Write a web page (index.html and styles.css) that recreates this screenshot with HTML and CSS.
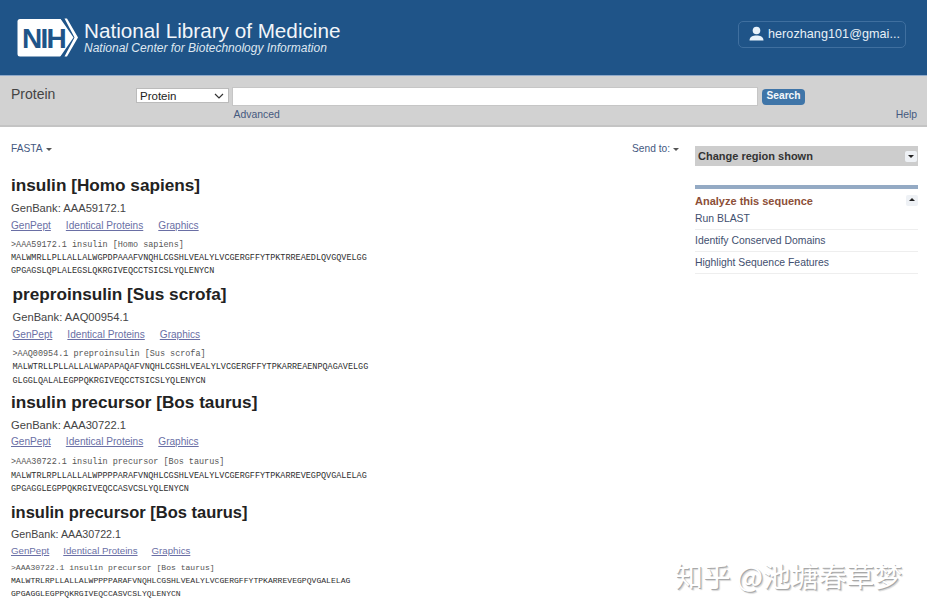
FILE: index.html
```html
<!DOCTYPE html>
<html lang="en">
<head>
<meta charset="utf-8">
<title>Protein - NCBI</title>
<link rel="stylesheet" href="styles.css">
</head>
<body>
<header class="masthead">
  <div class="brand">
    <svg class="nih-logo" width="61" height="40" viewBox="0 0 61 40">
      <path d="M3 1H44L59.500 19.500L44 38.500H3Q0.500 38.500 0.500 36V3.500Q0.500 1 3 1Z" fill="#fff"/>
      <path d="M43 0H47L61 19.500L47 39H43L56.500 19.500Z" fill="#1f5488"/>
      <path d="M47.500 0.500H50L61 19.500L50 38.500H47.500L57.500 19.500Z" fill="#fff"/>
      <text x="5" y="29.500" class="nih-text">NIH</text>
    </svg>
    <div class="brand-text">
      <div class="brand-title">National Library of Medicine</div>
      <div class="brand-sub">National Center for Biotechnology Information</div>
    </div>
  </div>
  <div class="account">
    <svg width="15" height="15" viewBox="0 0 15 15"><circle cx="7.500" cy="4.500" r="3.800" fill="#e8f2fa"/><path d="M0.500 14.500C0.500 10.500 4 9.500 7.500 9.500S14.500 10.500 14.500 14.500Z" fill="#e8f2fa"/></svg>
    <span>herozhang101@gmai...</span>
  </div>
</header>

<section class="searchbar">
  <div class="db-name">Protein</div>
  <div class="select-box"><span>Protein</span><svg width="10" height="6" viewBox="0 0 10 6"><path d="M1 1L5 5L9 1" fill="none" stroke="#333" stroke-width="1.200"/></svg></div>
  <div class="search-col">
    <div class="search-input"></div>
    <a class="advanced">Advanced</a>
  </div>
  <div class="search-right">
    <div class="search-btn">Search</div>
    <a class="help">Help</a>
  </div>
</section>

<main class="content">
  <div class="left">
    <div class="toolbar">
      <span class="tool">FASTA<i class="caret"></i></span>
      <span class="tool">Send to:<i class="caret"></i></span>
    </div>

    <article class="record r1">
      <h2>insulin [Homo sapiens]</h2>
      <div class="acc">GenBank: AAA59172.1</div>
      <div class="links"><a>GenPept</a><a>Identical Proteins</a><a>Graphics</a></div>
      <pre><span class="def">&gt;AAA59172.1 insulin [Homo sapiens]</span>
MALWMRLLPLLALLALWGPDPAAAFVNQHLCGSHLVEALYLVCGERGFFYTPKTRREAEDLQVGQVELGG
GPGAGSLQPLALEGSLQKRGIVEQCCTSICSLYQLENYCN</pre>
    </article>

    <article class="record r2">
      <h2>preproinsulin [Sus scrofa]</h2>
      <div class="acc">GenBank: AAQ00954.1</div>
      <div class="links"><a>GenPept</a><a>Identical Proteins</a><a>Graphics</a></div>
      <pre><span class="def">&gt;AAQ00954.1 preproinsulin [Sus scrofa]</span>
MALWTRLLPLLALLALWAPAPAQAFVNQHLCGSHLVEALYLVCGERGFFYTPKARREAENPQAGAVELGG
GLGGLQALALEGPPQKRGIVEQCCTSICSLYQLENYCN</pre>
    </article>

    <article class="record r3">
      <h2>insulin precursor [Bos taurus]</h2>
      <div class="acc">GenBank: AAA30722.1</div>
      <div class="links"><a>GenPept</a><a>Identical Proteins</a><a>Graphics</a></div>
      <pre><span class="def">&gt;AAA30722.1 insulin precursor [Bos taurus]</span>
MALWTRLRPLLALLALWPPPPARAFVNQHLCGSHLVEALYLVCGERGFFYTPKARREVEGPQVGALELAG
GPGAGGLEGPPQKRGIVEQCCASVCSLYQLENYCN</pre>
    </article>

    <article class="record r4">
      <h2>insulin precursor [Bos taurus]</h2>
      <div class="acc">GenBank: AAA30722.1</div>
      <div class="links"><a>GenPept</a><a>Identical Proteins</a><a>Graphics</a></div>
      <pre><span class="def">&gt;AAA30722.1 insulin precursor [Bos taurus]</span>
MALWTRLRPLLALLALWPPPPARAFVNQHLCGSHLVEALYLVCGERGFFYTPKARREVEGPQVGALELAG
GPGAGGLEGPPQKRGIVEQCCASVCSLYQLENYCN</pre>
    </article>
  </div>

  <aside class="side">
    <div class="region"><span>Change region shown</span><i class="mini down"></i></div>
    <div class="analyze">
      <div class="analyze-head"><span>Analyze this sequence</span><i class="mini up"></i></div>
      <a class="side-link first">Run BLAST</a>
      <a class="side-link">Identify Conserved Domains</a>
      <a class="side-link">Highlight Sequence Features</a>
    </div>
  </aside>
</main>

<div class="watermark">知乎 @池塘春草梦</div>
</body>
</html>
```

FILE: styles.css
```css
* { box-sizing: border-box; }
html, body { margin: 0; padding: 0; height: 616px; overflow: hidden; background: #fff; }
body { font-family: "Liberation Sans", Arial, sans-serif; color: #333; position: relative; width: 927px; }
a { text-decoration: none; }

.masthead { height: 76px; background: #1f5488; display: flex; justify-content: space-between; align-items: flex-start; padding: 18px 21px 0 17px; border-bottom: 1px solid #8fa9c9; }
.brand { display: flex; gap: 6px; }
.nih-logo { display: block; }
.nih-text { font: 700 28px "Liberation Sans", Arial, sans-serif; fill: #1f5488; letter-spacing: -1.800px; }
.brand-text { color: #f2f6fa; }
.brand-title { font-size: 20.700px; line-height: 23px; margin-top: 1px; }
.brand-sub { font-size: 12px; font-style: italic; line-height: 13px; color: #dfe8f1; }
.account { width: 168px; height: 27px; margin-top: 3px; border: 1px solid #3f6f9f; border-radius: 5px; display: flex; align-items: center; gap: 4px; padding: 0 0 2px 10px; font-size: 12.600px; letter-spacing: 0.050px; color: #e8f0f7; }

.searchbar { height: 51px; background: #d2d2d2; border-bottom: 2px solid #c4c4c4; display: flex; align-items: flex-start; padding: 0 10px 0 11px; position: relative; }
.db-name { width: 125px; font-size: 14px; color: #444; margin-top: 10px; }
.select-box { width: 93px; height: 15px; margin-top: 12px; margin-right: 3px; background: #fff; border: 1px solid #bbb; display: flex; align-items: center; justify-content: space-between; padding: 0 4px 0 3px; font-size: 11.500px; color: #222; }
.search-col { width: 526px; margin-top: 11px; }
.search-input { height: 19px; background: #fff; border: 1px solid #c6c6c6; }
.advanced { display: block; font-size: 10.400px; color: #45597f; margin: 3px 0 0 1.500px; }
.search-right { flex: 1; display: flex; justify-content: space-between; align-items: flex-start; padding-left: 4px; }
.search-btn { margin-top: 13px; width: 43px; height: 16px; border-radius: 4px; background: #3f75a8; color: #f4f8fb; font-size: 10.200px; font-weight: 700; text-align: center; line-height: 14px; }
.help { font-size: 10.400px; color: #45597f; margin-top: 33px; }

.content { display: flex; padding-left: 11px; }
.left { width: 668px; }
.toolbar { display: flex; justify-content: space-between; font-size: 10.200px; color: #45597f; padding-top: 16px; height: 43px; }
.caret { display: inline-block; margin-left: 3px; vertical-align: middle; border: 3px solid transparent; border-top-color: #555; border-bottom-width: 0; }

.record h2 { margin: 0; font-size: 17.200px; line-height: 20px; font-weight: 700; color: #222; }
.acc { font-size: 11.200px; line-height: 14px; margin-top: 6px; color: #444; }
.links { font-size: 10.100px; line-height: 13px; margin-top: 3.500px; display: flex; gap: 15px; }
.links a { color: #6a6fa5; text-decoration: underline; }
pre { margin: 7px 0 0; font-family: "Liberation Mono", "Courier New", monospace; font-size: 8.480px; line-height: 13.400px; color: #2e2e2e; }
.def { color: #555; }

.r1 { margin-top: 5px; }
.r2 { margin-top: 5.500px; margin-left: 1.500px; }
.r3 { margin-top: 4.500px; }
.r3 .links { margin-top: 3px; }
.r3 pre { margin-top: 8px; }
.r4 { margin-top: 5px; }
.r4 h2 { font-size: 16.500px; }
.r4 .acc { margin-top: 5px; font-size: 10.700px; }
.r4 .links { font-size: 9.700px; margin-top: 3px; gap: 14px; }
.r4 pre { font-size: 8.080px; margin-top: 4px; line-height: 13px; }

.side { width: 223px; margin-left: 16px; padding-top: 19px; }
.region { height: 20px; background: #cdcdcd; display: flex; align-items: center; justify-content: space-between; padding: 0 1px 0 3px; font-size: 11px; font-weight: 700; color: #333; }
.mini { width: 12px; height: 11px; background: #eef1f5; border-radius: 2px; position: relative; display: block; }
.mini::after { content: ""; position: absolute; left: 3px; border: 3px solid transparent; }
.down::after { top: 4px; border-top-color: #222; border-bottom-width: 0; }
.up::after { top: 3px; border-bottom-color: #222; border-top-width: 0; }
.analyze { margin-top: 19px; border-top: 4px solid #94aac4; }
.analyze-head { display: flex; justify-content: space-between; align-items: flex-start; font-size: 11px; font-weight: 700; color: #8c4f38; padding: 6px 0 0 0; height: 23px; }
.side-link { display: block; font-size: 10.400px; color: #3f4f6f; height: 22px; line-height: 20px; border-bottom: 1px solid #eee; }
.side-link.first { height: 18px; line-height: 13px; }
.side-link + .side-link { padding-top: 1px; }

.watermark { position: absolute; left: 675px; top: 557px; font-family: "Noto Sans CJK SC", sans-serif; font-size: 27.800px; line-height: 36px; color: #fff; text-shadow: 1px 1px 0 #a8a8a8, 2px 2px 1px #d8d8d8; white-space: nowrap; }
```
